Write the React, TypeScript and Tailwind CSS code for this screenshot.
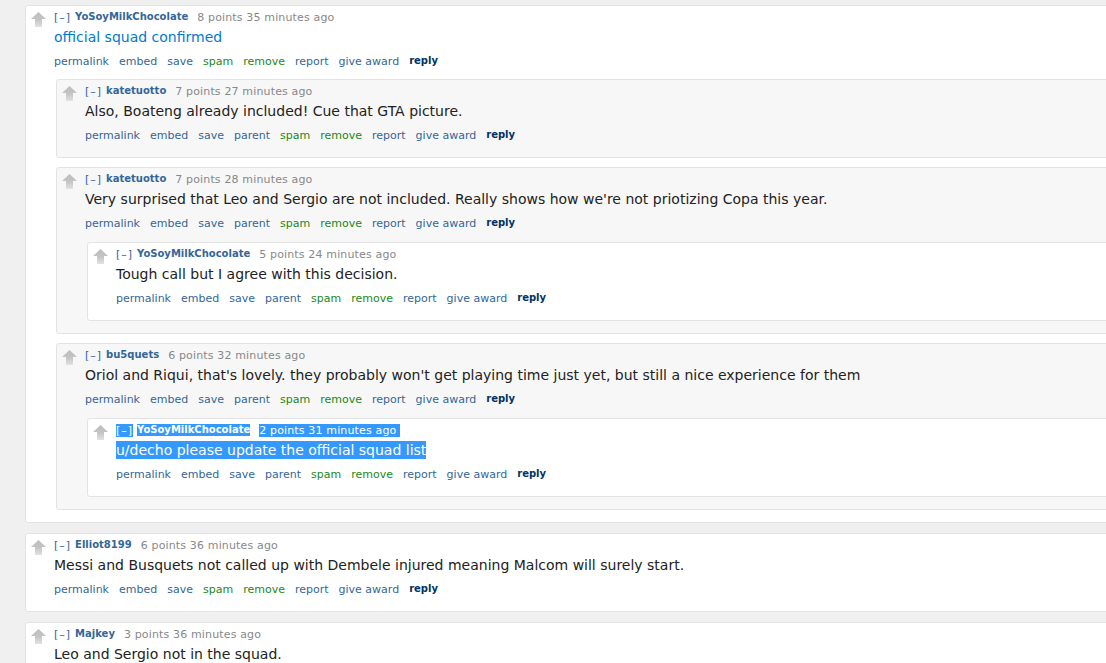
import type { FC } from "react";

type Comment = {
  author: string;
  points: number;
  time: string;
  body: string;
  link?: boolean;
  selected?: boolean;
  parent?: boolean;
  children?: Comment[];
};

const comments: Comment[] = [
  {
    author: "YoSoyMilkChocolate",
    points: 8,
    time: "35 minutes ago",
    body: "official squad confirmed",
    link: true,
    children: [
      {
        author: "katetuotto",
        points: 7,
        time: "27 minutes ago",
        body: "Also, Boateng already included! Cue that GTA picture.",
        parent: true,
      },
      {
        author: "katetuotto",
        points: 7,
        time: "28 minutes ago",
        body: "Very surprised that Leo and Sergio are not included. Really shows how we're not priotizing Copa this year.",
        parent: true,
        children: [
          {
            author: "YoSoyMilkChocolate",
            points: 5,
            time: "24 minutes ago",
            body: "Tough call but I agree with this decision.",
            parent: true,
          },
        ],
      },
      {
        author: "bu5quets",
        points: 6,
        time: "32 minutes ago",
        body: "Oriol and Riqui, that's lovely. they probably won't get playing time just yet, but still a nice experience for them",
        parent: true,
        children: [
          {
            author: "YoSoyMilkChocolate",
            points: 2,
            time: "31 minutes ago",
            body: "u/decho please update the official squad list",
            parent: true,
            selected: true,
          },
        ],
      },
    ],
  },
  {
    author: "Elliot8199",
    points: 6,
    time: "36 minutes ago",
    body: "Messi and Busquets not called up with Dembele injured meaning Malcom will surely start.",
  },
  {
    author: "Majkey",
    points: 3,
    time: "36 minutes ago",
    body: "Leo and Sergio not in the squad.",
  },
];

const UpArrow: FC = () => (
  <svg width="15" height="15" viewBox="0 0 15 15" className="block">
    <defs>
      <linearGradient id="up" x1="0" y1="0" x2="0" y2="1">
        <stop offset="0" stopColor="#bdbdbd" />
        <stop offset="0.5" stopColor="#c4c4c4" />
        <stop offset="1" stopColor="#e2e2e2" />
      </linearGradient>
    </defs>
    <polygon points="7.5,0 15,7 11,7 11,15 4,15 4,7 0,7" fill="url(#up)" />
  </svg>
);

const Buttons: FC<{ parent?: boolean }> = ({ parent }) => {
  const items: [string, string][] = [
    ["permalink", "text-[#336699]"],
    ["embed", "text-[#336699]"],
    ["save", "text-[#336699]"],
  ];
  if (parent) items.push(["parent", "text-[#336699]"]);
  items.push(
    ["spam", "text-[#228822]"],
    ["remove", "text-[#228822]"],
    ["report", "text-[#336699]"],
    ["give award", "text-[#336699]"]
  );
  return (
    <div className="mt-[6px] flex h-[16px] items-center gap-[10px] text-[11px] leading-none">
      {items.map(([label, color]) => (
        <span key={label} className={color}>
          {label}
        </span>
      ))}
      <span className="text-[10px] font-bold text-[#003366]">reply</span>
    </div>
  );
};

const CommentBox: FC<{ c: Comment; depth: number }> = ({ c, depth }) => {
  const bg = depth % 2 === 1 ? "bg-[#f7f7f7]" : "bg-white";
  const sel = c.selected ? "bg-[#3399ff] py-[1px] text-white" : "";
  return (
    <div
      className={`flex rounded-[3px] border border-[#e3e3e3] ${bg} pl-[5px] pt-[4px] ${
        c.children ? "pb-[12px]" : "pb-[14px]"
      }`}
    >
      <div className="w-[23px] shrink-0 pt-[2px]">
        <UpArrow />
      </div>
      <div className="min-w-0 flex-1">
        <div className="flex h-[14px] items-center whitespace-nowrap text-[11px] leading-none tracking-[0.15px] text-[#888888]">
          <span className={`tracking-[1px] ${c.selected ? sel : "text-[#336699]"}`}>[–]</span>
          <span
            className={`ml-[4px] text-[10px] font-bold tracking-normal ${
              c.selected ? sel : "text-[#336699]"
            }`}
          >
            {c.author}
          </span>
          <span className={`ml-[9px] ${sel}`}>
            {c.points} points {c.time}
            {c.selected ? "\u00a0" : ""}
          </span>
        </div>
        <div
          className={`mt-[3px] flex h-[20px] items-center whitespace-nowrap text-[14px] leading-none ${
            c.link ? "text-[#0079d3]" : "text-[#222222]"
          }`}
        >
          <span className={c.selected ? "bg-[#3399ff] py-[2px] text-white" : ""}>{c.body}</span>
        </div>
        <Buttons parent={c.parent} />
        {c.children && (
          <div
            className={`ml-[2px] flex flex-col gap-[9px] ${depth === 0 ? "mt-[10px]" : "mt-[11px]"}`}
          >
            {c.children.map((ch, i) => (
              <CommentBox key={i} c={ch} depth={depth + 1} />
            ))}
          </div>
        )}
      </div>
    </div>
  );
};

export default function App() {
  return (
    <div
      className="h-[663px] w-[1106px] overflow-hidden bg-[#f0f0f0] pl-[25px] pt-[5px]"
      style={{ fontFamily: '"DejaVu Sans", Verdana, sans-serif' }}
    >
      <div className="flex w-[1120px] flex-col gap-[10px]">
        {comments.map((c, i) => (
          <CommentBox key={i} c={c} depth={0} />
        ))}
      </div>
    </div>
  );
}
